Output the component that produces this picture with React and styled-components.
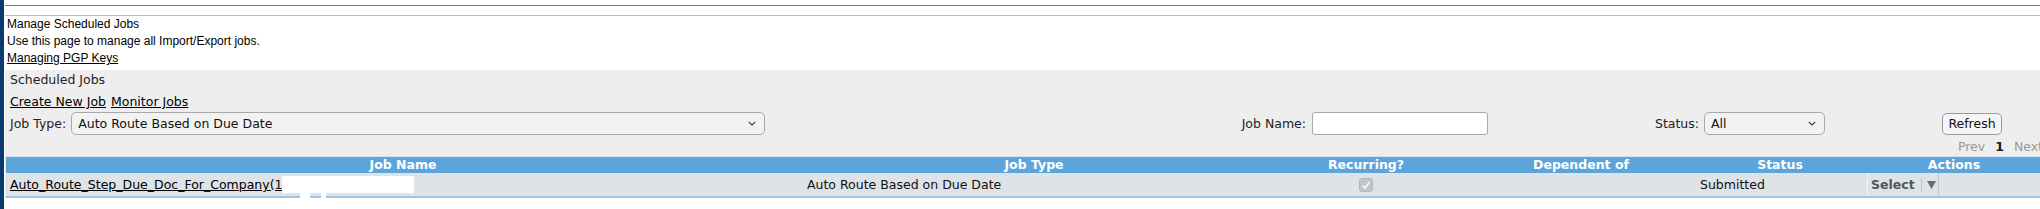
import React from 'react';
import styled, { createGlobalStyle } from 'styled-components';

const GlobalStyle = createGlobalStyle`
  html, body {
    margin: 0;
    padding: 0;
    background: #fff;
    overflow: hidden;
  }
`;

const COLS = '794px 468px 196px 234px 164px 184px';
const UI = `"DejaVu Sans", Verdana, sans-serif`;

const Page = styled.div`
  display: flex;
  width: 2052px;
  min-height: 209px;
`;

const Strip = styled.div`
  flex: none;
  width: 4px;
  background: #0b3a6f;
`;

const Main = styled.div`
  flex: 1;
  padding: 4px 0 0 1px;
`;

const Rule = styled.div`
  height: ${(p) => p.h || 1}px;
  background: ${(p) => p.color};
  margin-top: ${(p) => p.gap || 0}px;
`;

const Intro = styled.div`
  padding-left: 2px;
  font-family: "Liberation Sans", Arial, sans-serif;
  font-size: 12px;
  line-height: 17px;
  color: #000;
`;

const Link = styled.a`
  color: #000;
  text-decoration: underline;
  cursor: pointer;
`;

const Panel = styled.div`
  background: #eeeeee;
  font-family: ${UI};
  font-size: 12.5px;
  color: #222;
  white-space: nowrap;
`;

const Line = styled.div`
  padding-left: 5px;
  line-height: 20px;
  margin-top: ${(p) => p.gap || 0}px;
  display: flex;
  gap: 5px;
`;

const Filters = styled.div`
  display: grid;
  grid-template-columns: 1235px 255px 337px 1fr;
  align-items: center;
  height: 23px;
  padding-left: 5px;
`;

const Field = styled.label`
  display: flex;
  align-items: center;
  gap: ${(p) => p.gap || 5}px;
  justify-content: ${(p) => (p.end ? 'flex-end' : 'flex-start')};
  padding-right: ${(p) => p.pr || 0}px;
  white-space: nowrap;
`;

const SelectBox = styled.div`
  box-sizing: border-box;
  flex: none;
  width: ${(p) => p.w}px;
  height: 23px;
  border: 1px solid #a9a9a9;
  border-radius: 5px;
  background: #f2f2f2;
  display: flex;
  align-items: center;
  justify-content: space-between;
  padding: 0 8px 0 6px;
  color: #111;
`;

const TextInput = styled.div`
  box-sizing: border-box;
  flex: none;
  width: 176px;
  height: 23px;
  border: 1px solid #a9a9a9;
  border-radius: 3px;
  background: #fff;
`;

const Button = styled.div`
  box-sizing: border-box;
  margin-left: 105px;
  width: 60px;
  height: 22px;
  border: 1px solid #9a9a9a;
  border-radius: 5px;
  background: #f5f5f5;
  display: flex;
  align-items: center;
  justify-content: center;
  color: #111;
`;

const Pager = styled.div`
  margin-top: 3px;
  line-height: 18px;
  display: flex;
  justify-content: flex-end;
  gap: 10px;
  padding-right: 9px;
  color: #9a9a9a;
`;

const Current = styled.b`
  color: #1a1a1a;
`;

const Table = styled.div`
  margin-left: 1px;
  width: 2040px;
`;

const HeadRow = styled.div`
  display: grid;
  grid-template-columns: ${COLS};
  height: 16px;
  border-top: 1px solid #d2e2f0;
  background: #5ca5db;
  color: #fff;
  font-weight: bold;
  line-height: 16px;
  text-align: center;
`;

const Row = styled.div`
  display: grid;
  grid-template-columns: ${COLS};
  height: 23px;
  align-items: center;
  background: #dee3e8;
  border-bottom: 2px solid #9dc5e9;
  color: #111;
`;

const Cell = styled.div`
  padding-left: ${(p) => p.pl || 0}px;
  display: flex;
  align-items: center;
  justify-content: ${(p) => (p.center ? 'center' : 'flex-start')};
  height: 100%;
`;

const Redact = styled.span`
  position: relative;
  display: inline-block;
  width: 132px;
  height: 17px;
  background: #fff;
`;

const Speck = styled.span`
  position: absolute;
  top: 17px;
  left: ${(p) => p.x}px;
  width: ${(p) => p.w}px;
  height: 5px;
  background: #fff;
`;

const Actions = styled.div`
  box-sizing: border-box;
  margin-left: 5px;
  height: 100%;
  width: 72px;
  display: flex;
  align-items: center;
  border-left: 1px solid #f4f4f4;
  border-right: 1px solid #c9c9c9;
  padding-left: 3px;
  color: #555;
  font-weight: bold;
`;

const Divider = styled.span`
  width: 1px;
  height: 14px;
  background: #c4c4c4;
  margin: 0 5px 0 6px;
`;

const Chevron = () => (
  <svg width="8" height="5" viewBox="0 0 8 5">
    <polyline points="0.8,0.8 4,4 7.2,0.8" fill="none" stroke="#333" strokeWidth="1.1" />
  </svg>
);

const Check = () => (
  <svg width="14" height="14" viewBox="0 0 14 14">
    <rect x="0.5" y="0.5" width="13" height="13" rx="2.5" fill="#c3c5c8" stroke="#b5b7ba" />
    <polyline points="3.6,7.4 6,10 10.5,4" fill="none" stroke="#fff" strokeWidth="1.5" />
  </svg>
);

const Caret = () => (
  <svg width="9" height="8" viewBox="0 0 9 8">
    <polygon points="0,0 9,0 4.5,8" fill="#6a6a6a" />
  </svg>
);

const App = () => {
  return (
    <>
      <GlobalStyle />
      <Page>
        <Strip />
        <Main>
          <Rule color="#7d7d7d" gap={1} />
          <Rule color="#a7bfd9" gap={9} />
          <Intro>
            <div>Manage Scheduled Jobs</div>
            <div>Use this page to manage all Import/Export jobs.</div>
            <div><Link>Managing PGP Keys</Link></div>
          </Intro>
          <Panel>
            <Line gap={3}>Scheduled Jobs</Line>
            <Line gap={2}>
              <Link>Create New Job</Link>
              <Link>Monitor Jobs</Link>
            </Line>
            <Filters>
              <Field>
                Job Type:
                <SelectBox w={694}>
                  <span>Auto Route Based on Due Date</span>
                  <Chevron />
                </SelectBox>
              </Field>
              <Field end pr={12} gap={6}>
                Job Name:
                <TextInput />
              </Field>
              <Field end pr={12}>
                Status:
                <SelectBox w={121}>
                  <span>All</span>
                  <Chevron />
                </SelectBox>
              </Field>
              <Button>Refresh</Button>
            </Filters>
            <Pager>
              <span>Prev</span>
              <Current>1</Current>
              <span>Next</span>
            </Pager>
            <Table>
              <HeadRow>
                <div>Job Name</div>
                <div>Job Type</div>
                <div>Recurring?</div>
                <div>Dependent of</div>
                <div>Status</div>
                <div>Actions</div>
              </HeadRow>
              <Row>
                <Cell pl={4}>
                  <Link>Auto_Route_Step_Due_Doc_For_Company(1</Link>
                  <Redact>
                    <Speck x={18} w={10} />
                    <Speck x={39} w={5} />
                  </Redact>
                </Cell>
                <Cell pl={7}>Auto Route Based on Due Date</Cell>
                <Cell center>
                  <Check />
                </Cell>
                <Cell />
                <Cell pl={2}>Submitted</Cell>
                <Cell>
                  <Actions>
                    Select
                    <Divider />
                    <Caret />
                  </Actions>
                </Cell>
              </Row>
            </Table>
          </Panel>
        </Main>
      </Page>
    </>
  );
};

export default App;
